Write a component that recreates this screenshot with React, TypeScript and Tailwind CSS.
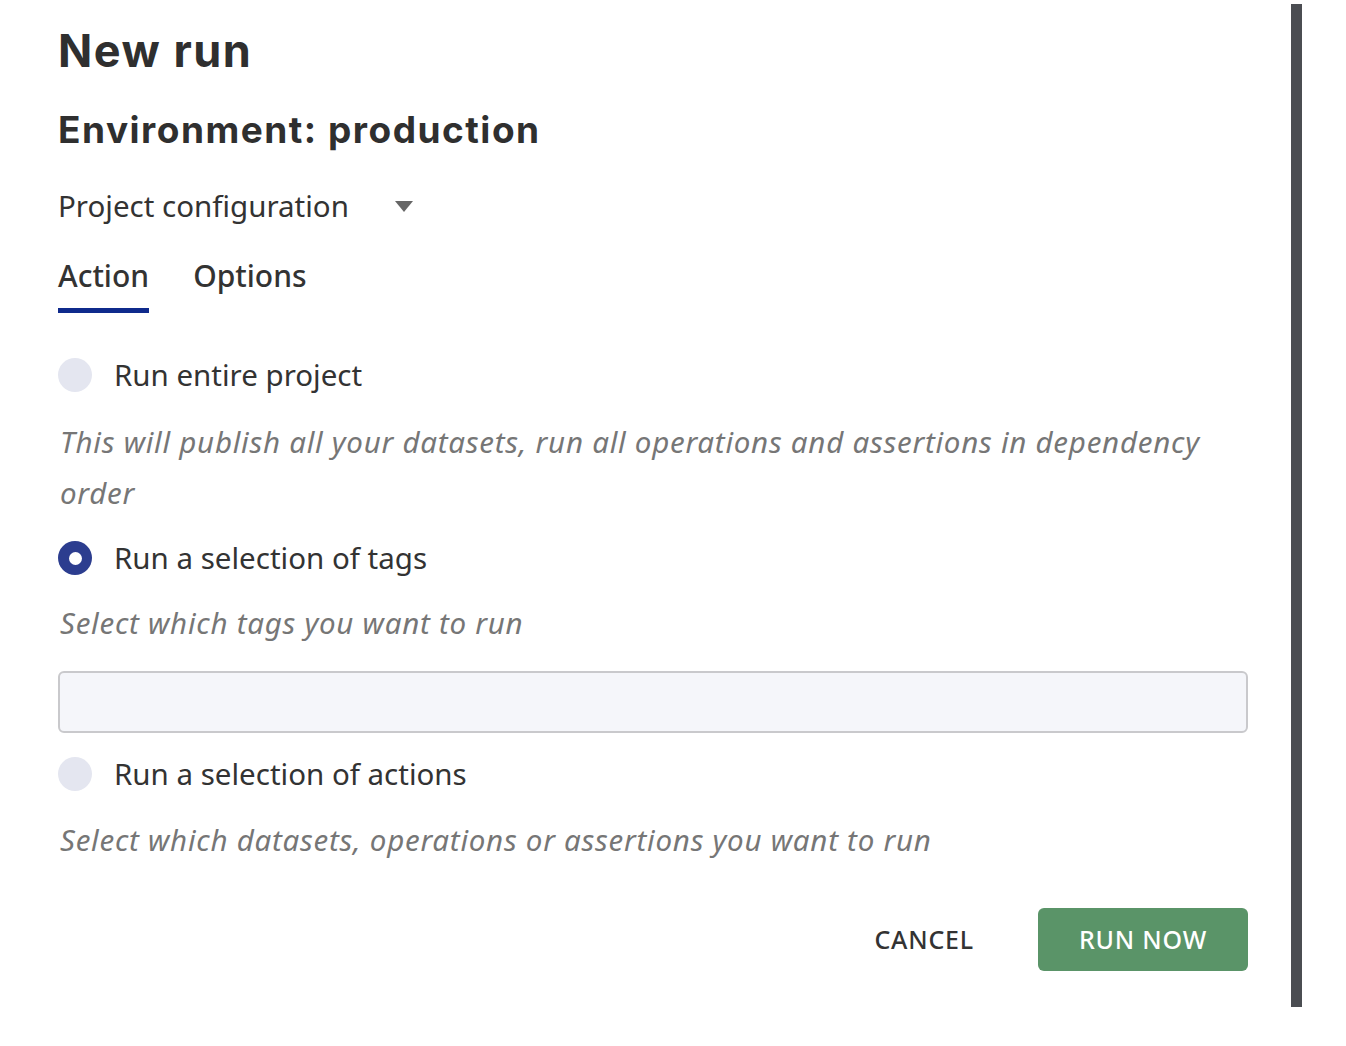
import React from "react";

const body = { fontFamily: '"Noto Sans", "Open Sans", sans-serif' };
const ital = { fontFamily: '"Noto Sans", "Open Sans", sans-serif' };
const head = { fontFamily: 'Inter, "Noto Sans", sans-serif' };

function Radio({ checked }: { checked?: boolean }) {
  if (checked) {
    return (
      <div className="w-[34px] h-[34px] rounded-full bg-[#2c3d8f] flex items-center justify-center shrink-0">
        <div className="w-[13px] h-[13px] rounded-full bg-white" />
      </div>
    );
  }
  return <div className="w-[34px] h-[34px] rounded-full bg-[#e4e6f0] shrink-0" />;
}

function Option({ label, checked, mt }: { label: string; checked?: boolean; mt: string }) {
  return (
    <div className={`${mt} h-[40px] flex items-center gap-[22px]`}>
      <Radio checked={checked} />
      <span className="text-[29.5px] leading-[40px] text-[#333333]" style={body}>
        {label}
      </span>
    </div>
  );
}

export default function App() {
  return (
    <div className="flex bg-white w-[1346px] h-[1046px] overflow-hidden">
      <div className="w-[1291px] pl-[58px] pr-[43px] flex flex-col">
        <div
          className="mt-[26px] h-[50px] leading-[50px] text-[45px] font-bold text-[#2f2f2f] tracking-[1.5px]"
          style={head}
        >
          New run
        </div>
        <div
          className="mt-[34px] h-[40px] leading-[40px] text-[37px] font-bold text-[#2f2f2f] tracking-[1.5px]"
          style={head}
        >
          Environment: production
        </div>
        <div className="mt-[36px] h-[40px] flex items-center">
          <span className="text-[29.5px] leading-[40px] text-[#333333]" style={body}>
            Project configuration
          </span>
          <svg className="ml-[46px]" width="18" height="11" viewBox="0 0 18 11">
            <path d="M0 0 L18 0 L9 11 Z" fill="#666666" />
          </svg>
        </div>
        <div className="mt-[24px] flex gap-[44px]" style={body}>
          <div className="flex flex-col">
            <span className="h-[52px] leading-[52px] text-[30px] font-medium text-[#333333]">Action</span>
            <div className="mt-[6px] h-[5px] bg-[#0f2a8c]" />
          </div>
          <div className="flex flex-col">
            <span className="h-[52px] leading-[52px] text-[30px] font-medium text-[#333333]">Options</span>
          </div>
        </div>
        <Option mt="mt-[42px]" label="Run entire project" />
        <p className="mt-[21px] pl-[2px] text-[29.5px] tracking-[0.75px] leading-[51px] italic text-[#767676]" style={ital}>
          This will publish all your datasets, run all operations and assertions in dependency order
        </p>
        <Option mt="mt-[20px]" label="Run a selection of tags" checked />
        <p className="mt-[20px] pl-[2px] h-[50px] text-[29.5px] tracking-[0.75px] leading-[50px] italic text-[#767676]" style={ital}>
          Select which tags you want to run
        </p>
        <div className="mt-[23px] h-[62px] rounded-[6px] border-2 border-[#c9c9cc] bg-[#f5f6fa]" />
        <Option mt="mt-[21px]" label="Run a selection of actions" />
        <p className="mt-[21px] pl-[2px] h-[50px] text-[29.5px] tracking-[0.75px] leading-[50px] italic text-[#767676]" style={ital}>
          Select which datasets, operations or assertions you want to run
        </p>
        <div className="mt-[43px] flex justify-end items-center" style={body}>
          <span className="text-[25px] tracking-[0.8px] font-medium text-[#333333] mr-[64px]">CANCEL</span>
          <div className="w-[210px] h-[63px] rounded-[6px] bg-[#5a9468] flex items-center justify-center">
            <span className="text-[25px] tracking-[0.8px] font-medium text-white">RUN NOW</span>
          </div>
        </div>
      </div>
      <div className="w-[11px] mt-[4px] h-[1003px] bg-[#4b4d52]" />
    </div>
  );
}
